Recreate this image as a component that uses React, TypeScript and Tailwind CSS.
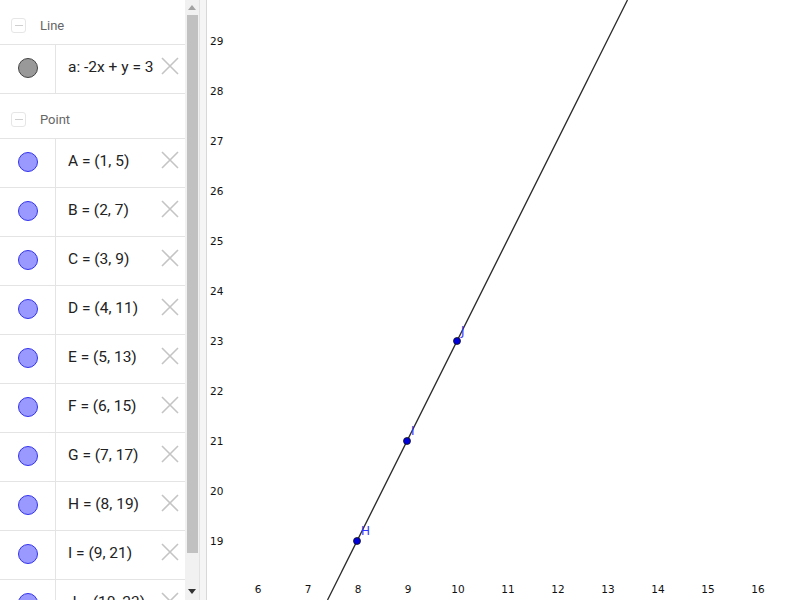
import React from "react";

const points = [
  ["A", "(1, 5)"],
  ["B", "(2, 7)"],
  ["C", "(3, 9)"],
  ["D", "(4, 11)"],
  ["E", "(5, 13)"],
  ["F", "(6, 15)"],
  ["G", "(7, 17)"],
  ["H", "(8, 19)"],
  ["I", "(9, 21)"],
  ["J", "(10, 23)"],
];

function XIcon() {
  return (
    <svg width="18" height="18" viewBox="0 0 18 18" className="shrink-0 mb-[7px] mr-[1px]">
      <path d="M1 1 L17 17 M17 1 L1 17" stroke="#c4c4c4" strokeWidth="1.6" fill="none" />
    </svg>
  );
}

function Header({ label }: { label: string }) {
  return (
    <div className="h-[45px] pt-[7px] flex items-center border-b border-[#e4e4e4] shrink-0">
      <div className="ml-[11px] w-[15px] h-[15px] rounded-[3px] border border-[#e6e6e6] flex items-center justify-center">
        <div className="w-[8px] h-[1.5px] bg-[#cfcfcf]" />
      </div>
      <span className="ml-[14px] text-[13px] text-[#666]" style={{ fontFamily: "Roboto, sans-serif" }}>
        {label}
      </span>
    </div>
  );
}

function Row({ color, border, text }: { color: string; border: string; text: string }) {
  return (
    <div className="h-[49px] flex border-b border-[#e4e4e4] shrink-0">
      <div className="w-[56px] border-r border-[#e4e4e4] flex items-center justify-center shrink-0">
        <div
          className="w-[20px] h-[20px] rounded-full mb-[2px]"
          style={{ background: color, border: `1px solid ${border}` }}
        />
      </div>
      <div className="flex-1 flex items-center pl-[12px] pr-[5px]">
        <span
          className="flex-1 text-[15.5px] text-[#222] whitespace-nowrap overflow-hidden mb-[3px]"
          style={{ fontFamily: "Roboto, 'DejaVu Sans', sans-serif" }}
        >
          {text}
        </span>
        <XIcon />
      </div>
    </div>
  );
}

export default function App() {
  const X = (v: number) => 358 + (v - 8) * 50;
  const Y = (v: number) => 541 - (v - 19) * 50;
  const xLabels = [6, 7, 8, 9, 10, 11, 12, 13, 14, 15, 16];
  const yLabels = [19, 20, 21, 22, 23, 24, 25, 26, 27, 28, 29];
  const pts: [string, number, number][] = [
    ["H", 8, 19],
    ["I", 9, 21],
    ["J", 10, 23],
  ];
  return (
    <div className="w-[800px] h-[600px] flex overflow-hidden bg-white">
      <div className="w-[185px] h-[600px] flex flex-col overflow-hidden shrink-0">
        <Header label="Line" />
        <Row color="#999999" border="#444444" text="a: -2x + y = 3" />
        <Header label="Point" />
        {points.map(([n, c]) => (
          <Row key={n} color="#9999ff" border="#3333ee" text={`${n} = ${c}`} />
        ))}
      </div>
      <div className="w-[15px] h-[600px] bg-[#f1f1f1] flex flex-col items-center shrink-0 border-r border-[#e2e2e2]">
        <div className="h-[15px] flex items-center justify-center">
          <div className="w-0 h-0 border-l-[4px] border-r-[4px] border-b-[5px] border-l-transparent border-r-transparent border-b-[#a3a3a3]" />
        </div>
        <div className="w-[11px] h-[538px] bg-[#c1c1c1]" />
        <div className="flex-1" />
        <div className="h-[18px] flex items-center justify-center">
          <div className="w-0 h-0 border-l-[4px] border-r-[4px] border-t-[5px] border-l-transparent border-r-transparent border-t-[#333]" />
        </div>
      </div>
      <div className="w-[7px] h-[600px] bg-[#f5f5f5] border-r border-[#d8d8d8] shrink-0" />
      <div className="flex-1 h-[600px] relative">
        <svg
          width="592"
          height="600"
          viewBox="208 0 592 600"
          className="absolute left-0 top-0"
          style={{ fontFamily: "'DejaVu Sans', sans-serif" }}
        >
          <line x1={X(13.41)} y1={0} x2={X(7.41)} y2={600} stroke="#2a2a2a" strokeWidth="1.3" />
          {xLabels.map((v) => (
            <text key={v} x={X(v) + 1} y={593} fontSize="10.5" textAnchor="middle" fill="#111">
              {v}
            </text>
          ))}
          {yLabels.map((v) => (
            <text key={v} x={211} y={Y(v) + 4} fontSize="10.5" fill="#111">
              {v}
            </text>
          ))}
          {pts.map(([n, x, y]) => (
            <g key={n}>
              <circle cx={X(x)} cy={Y(y)} r="3.5" fill="#0000dd" stroke="#111" strokeWidth="0.8" />
              <text x={X(x) + 4} y={Y(y) - 6} fontSize="12" fill="#3333ff">
                {n}
              </text>
            </g>
          ))}
        </svg>
      </div>
    </div>
  );
}
